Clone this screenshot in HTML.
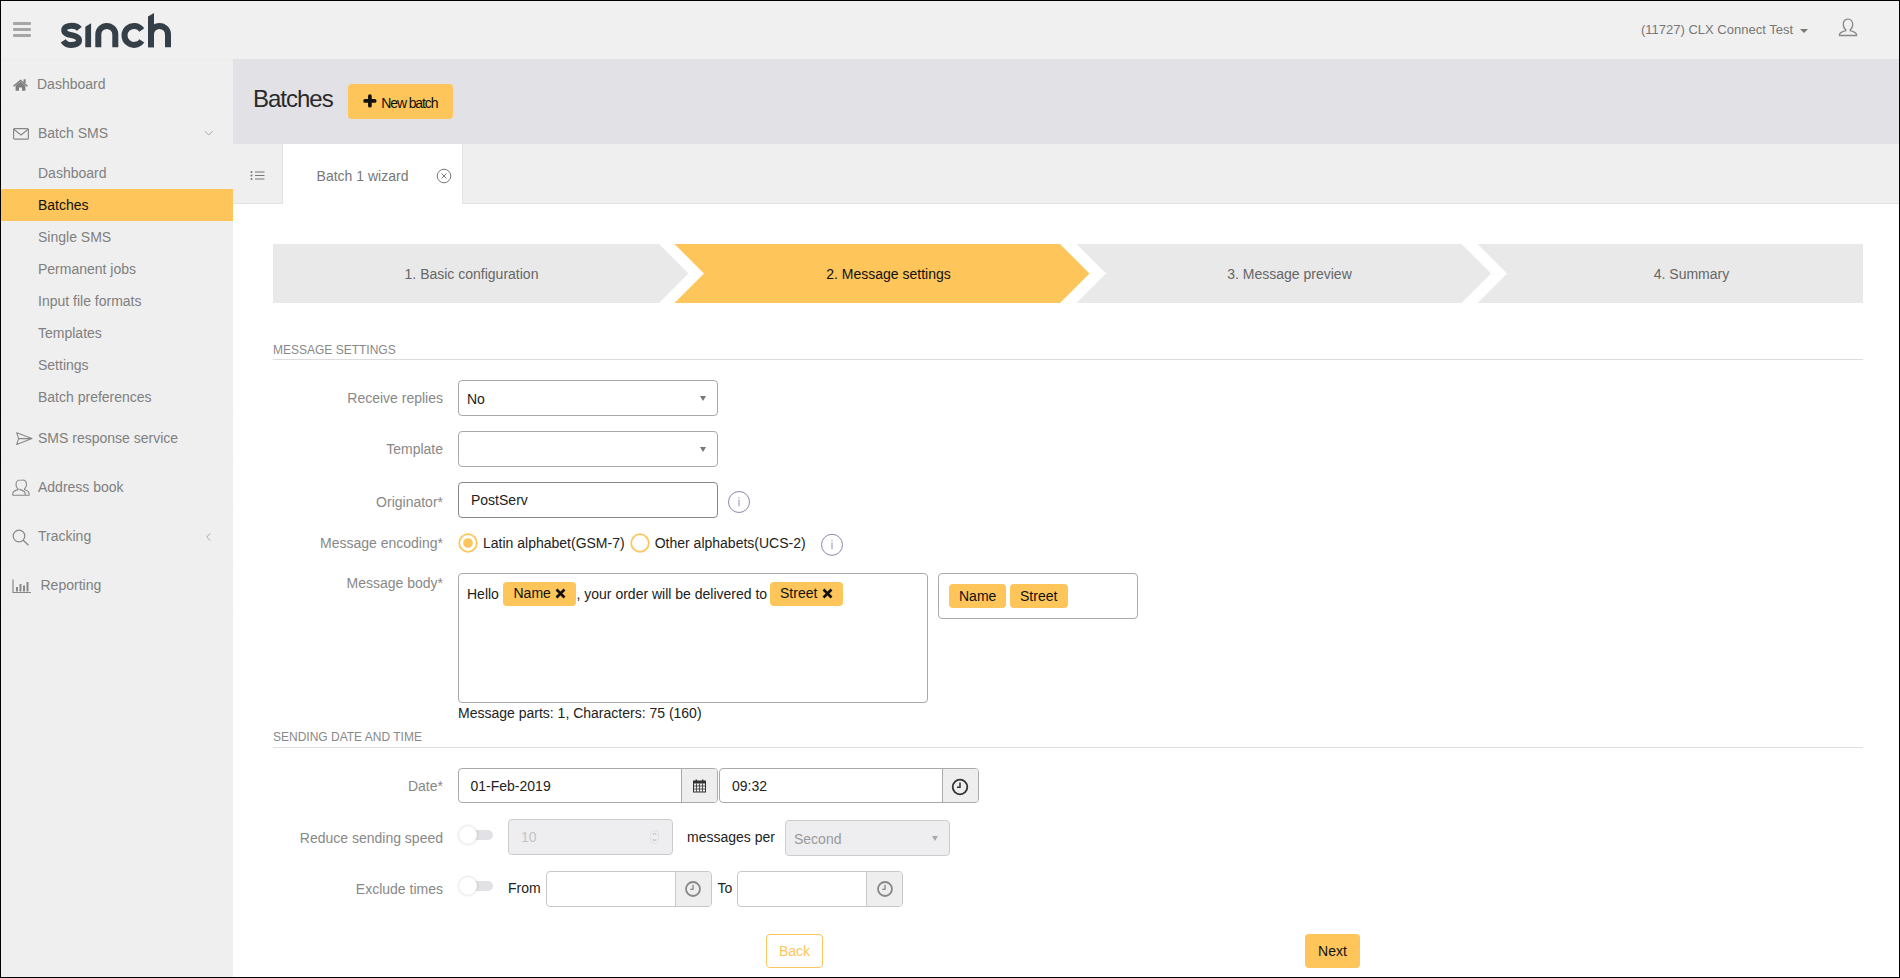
<!DOCTYPE html>
<html>
<head>
<meta charset="utf-8">
<style>
*{box-sizing:border-box;margin:0;padding:0}
html,body{width:1900px;height:978px;overflow:hidden;background:#fff}
body{font-family:"Liberation Sans",sans-serif;font-size:14px;color:#222;position:relative}
.abs{position:absolute}
svg{position:absolute;overflow:visible}
.t{position:absolute;white-space:nowrap;line-height:14px;font-size:14px}
.border{position:absolute;left:0;top:0;width:1900px;height:978px;border:1px solid #000;z-index:100}
.hdr{position:absolute;left:0;top:0;width:1900px;height:59px;background:#f0f0f0}
.side{position:absolute;left:0;top:59px;width:233px;height:919px;background:#efefef}
.phdr{position:absolute;left:233px;top:59px;width:1667px;height:85px;background:#e2e1e6}
.tabbar{position:absolute;left:233px;top:144px;width:1667px;height:60px;background:#efefef;border-bottom:1px solid #e2e1e6}
.listbtn{position:absolute;left:233px;top:144px;width:50px;height:60px;border-right:1px solid #e2e1e6;border-bottom:1px solid #e2e1e6}
.tab{position:absolute;left:283px;top:144px;width:180px;height:60px;background:#fff;border-right:1px solid #e2e1e6}
.sb{color:#808080}
.hl{position:absolute;left:0;top:189px;width:233px;height:32px;background:#fdc55a}
.btn-new{position:absolute;left:348px;top:84px;width:105px;height:35px;background:#fdc55a;border-radius:4px}
.lbl{position:absolute;white-space:nowrap;line-height:14px;font-size:14px;color:#888;right:1457px;text-align:right}
.sec{position:absolute;white-space:nowrap;line-height:12px;font-size:12px;color:#888;left:273px}
.hr{position:absolute;left:273px;width:1590px;height:1px;background:#ddd}
.box{position:absolute;border:1px solid #aaa;border-radius:4px;background:#fff}
.caret{position:absolute;width:0;height:0;border-left:3.5px solid transparent;border-right:3.5px solid transparent;border-top:5px solid #777}
.tag{position:absolute;background:#fdc55a;border-radius:4px;height:24px}
.addon{position:absolute;background:#eee;border-left:1px solid #aaa}
</style>
</head>
<body>
  <div class="hdr"></div>
  <div class="side"></div>
  <div class="phdr"></div>
  <div class="tabbar"></div>
  <div class="listbtn"></div>
  <div class="tab"></div>

  <!-- header left -->
  <div class="abs" style="left:13px;top:22px;width:18px;height:3px;background:#a6a6a6;border-radius:1px"></div>
  <div class="abs" style="left:13px;top:28px;width:18px;height:3px;background:#a6a6a6;border-radius:1px"></div>
  <div class="abs" style="left:13px;top:34px;width:18px;height:3px;background:#a6a6a6;border-radius:1px"></div>
  <svg style="left:0;top:0" width="200" height="58" viewBox="0 0 200 58">
    <g fill="none" stroke="#343f48" stroke-width="6">
      <path d="M79.3 28.8 C77 25.8 73.5 25.8 71.5 25.8 C67.5 25.8 64.2 27.3 64.2 30.3 C64.2 33.6 68 34.4 71.5 35.2 C76 36.2 79 37.2 79 40.6 C79 43.6 75.5 45 71.5 45 C67.5 45 65 43.5 63.2 40.8"/>
      <path d="M98.3 47.3 V34.5 A8.5 8.5 0 0 1 115.3 34.5 V47.3"/>
      <path d="M141.8 29.95 A9.5 9.5 0 1 0 141.8 40.85"/>
      <path d="M151 47.3 V34.5 A8.5 8.5 0 0 1 168 34.5 V47.3"/>
    </g>
    <g fill="#343f48">
      <polygon points="85.3,26.8 91.1,23.3 91.1,47.3 85.3,47.3"/>
      <polygon points="148,16.5 154,13 154,47.3 148,47.3"/>
    </g>
  </svg>

  <!-- header right -->
  <div class="t" style="left:1641px;top:22.7px;font-size:13px;line-height:13px;color:#777">(11727) CLX Connect Test</div>
  <div class="caret" style="left:1800px;top:29px;border-left-width:4px;border-right-width:4px;border-top-width:4px;border-top-color:#777"></div>
  <svg style="left:1838px;top:18px" width="20" height="19" viewBox="0 0 20 19">
    <path d="M10 1.2 C7 1.2 5.3 3.6 5.3 6.6 C5.3 9 6.3 10.8 7.8 11.8 L7.8 12.6 C5 13.4 1.5 14.5 1.5 16.5 L1.5 17.5 L18.5 17.5 L18.5 16.5 C18.5 14.5 15 13.4 12.2 12.6 L12.2 11.8 C13.7 10.8 14.7 9 14.7 6.6 C14.7 3.6 13 1.2 10 1.2 Z" fill="none" stroke="#888" stroke-width="1.3"/>
  </svg>

  <!-- sidebar -->
  <div class="abs" style="left:0;top:59px;width:233px;height:1px;background:#ededed"></div>
  <div class="abs" style="left:0;top:108px;width:233px;height:1px;background:#ededed"></div>
  <div class="hl"></div>
  <svg style="left:13px;top:79px" width="15" height="12" viewBox="0 0 15 12">
    <path d="M7.5 0.5 L0 6.8 L1 7.8 L7.5 2.4 L14 7.8 L15 6.8 Z M10.6 0.3 L12.6 0.3 L12.6 4.6 L10.6 2.9 Z" fill="#808080"/>
    <path d="M2.6 6.8 L7.5 2.8 L12.4 6.8 L12.4 11.8 L9 11.8 L9 8.5 L6 8.5 L6 11.8 L2.6 11.8 Z" fill="#808080"/>
  </svg>
  <div class="t sb" style="left:37px;top:76.7px">Dashboard</div>
  <svg style="left:13px;top:128px" width="17" height="12" viewBox="0 0 17 12">
    <rect x="0.6" y="0.6" width="14.8" height="10.6" rx="1" fill="none" stroke="#888" stroke-width="1.2"/>
    <path d="M0.8 1.2 L8 7 L15.2 1.2" fill="none" stroke="#888" stroke-width="1.2"/>
  </svg>
  <div class="t sb" style="left:38px;top:125.6px">Batch SMS</div>
  <svg style="left:204px;top:130px" width="10" height="7" viewBox="0 0 10 7">
    <path d="M1 1.2 L4.8 5 L8.6 1.2" fill="none" stroke="#aaa" stroke-width="1"/>
  </svg>
  <div class="t sb" style="left:38px;top:165.8px">Dashboard</div>
  <div class="t" style="left:38px;top:197.8px;color:#111">Batches</div>
  <div class="t sb" style="left:38px;top:229.8px">Single SMS</div>
  <div class="t sb" style="left:38px;top:261.8px">Permanent jobs</div>
  <div class="t sb" style="left:38px;top:293.8px">Input file formats</div>
  <div class="t sb" style="left:38px;top:325.8px">Templates</div>
  <div class="t sb" style="left:38px;top:357.8px">Settings</div>
  <div class="t sb" style="left:38px;top:389.8px">Batch preferences</div>
  <div class="abs" style="left:0;top:413px;width:233px;height:1px;background:#ededed"></div>
  <div class="abs" style="left:0;top:462px;width:233px;height:1px;background:#ededed"></div>
  <div class="abs" style="left:0;top:511px;width:233px;height:1px;background:#ededed"></div>
  <div class="abs" style="left:0;top:560px;width:233px;height:1px;background:#ededed"></div>
  <div class="abs" style="left:0;top:609px;width:233px;height:1px;background:#ededed"></div>
  <svg style="left:16px;top:432px" width="17" height="14" viewBox="0 0 17 14">
    <path d="M0.7 0.8 L16 6.6 L0.7 12.6 L2.6 6.6 Z M2.6 6.6 L16 6.6" fill="none" stroke="#888" stroke-width="1.1" stroke-linejoin="round"/>
  </svg>
  <div class="t sb" style="left:38px;top:431.1px">SMS response service</div>
  <svg style="left:12px;top:479px" width="18" height="18" viewBox="0 0 18 18">
    <path d="M8 1 C5.5 1 4 3 4 5.5 C4 7.5 5 9 6 9.8 L6 10.6 C3.5 11.3 0.8 12.4 0.8 14.5 L0.8 16.3 L13.2 16.3 L13.2 14.5 C13.2 12.4 10.5 11.3 8 10.6 L8 9.8" fill="none" stroke="#888" stroke-width="1.1"/>
    <path d="M8.5 1.5 C9.3 1.1 10 1 10.5 1 C13 1 14.5 3 14.5 5.5 C14.5 7.5 13.5 9 12.5 9.8 L12.5 10.6 C14.6 11.3 17 12.4 17 14.5 L17 16.3 L13.5 16.3" fill="none" stroke="#888" stroke-width="1.1"/>
  </svg>
  <div class="t sb" style="left:38px;top:480.2px">Address book</div>
  <svg style="left:12px;top:529px" width="18" height="17" viewBox="0 0 18 17">
    <circle cx="7" cy="7" r="5.8" fill="none" stroke="#888" stroke-width="1.2"/>
    <path d="M11.2 11.2 L16.5 16.3" stroke="#888" stroke-width="1.4"/>
  </svg>
  <div class="t sb" style="left:38px;top:529.3px">Tracking</div>
  <svg style="left:205px;top:532px" width="7" height="10" viewBox="0 0 7 10">
    <path d="M5.3 1.3 L1.8 5 L5.3 8.7" fill="none" stroke="#aaa" stroke-width="1"/>
  </svg>
  <svg style="left:12px;top:579px" width="20" height="15" viewBox="0 0 20 15">
    <path d="M1 0.5 L1 13.5 L19 13.5" fill="none" stroke="#888" stroke-width="1.2"/>
    <rect x="4" y="8" width="2" height="4.5" fill="#888"/>
    <rect x="7.5" y="5" width="2" height="7.5" fill="#888"/>
    <rect x="11" y="6.5" width="2" height="6" fill="#888"/>
    <rect x="14.5" y="3" width="2" height="9.5" fill="#888"/>
  </svg>
  <div class="t sb" style="left:40.5px;top:578.4px">Reporting</div>

  <!-- page header -->
  <div class="t" style="left:253px;top:87.2px;font-size:24px;line-height:24px;letter-spacing:-1px;color:#2a2a2a">Batches</div>
  <div class="btn-new"></div>
  <svg style="left:363.4px;top:94.3px" width="14" height="14" viewBox="0 0 14 14">
    <path d="M6.9 2.1 V11.7 M2.1 6.9 H11.7" stroke="#111" stroke-width="3.7" stroke-linecap="round"/>
  </svg>
  <div class="t" style="left:381.2px;top:95.95px;letter-spacing:-1.1px;color:#111">New batch</div>

  <!-- tab bar -->
  <svg style="left:249px;top:170px" width="17" height="11" viewBox="0 0 17 11">
    <g fill="#777"><circle cx="2.5" cy="2" r="1"/><circle cx="2.5" cy="5.5" r="1"/><circle cx="2.5" cy="9" r="1"/></g>
    <g stroke="#777" stroke-width="1"><path d="M6 2 H15.5 M6 5.5 H15.5 M6 9 H15.5"/></g>
  </svg>
  <div class="t" style="left:316.6px;top:168.95px;color:#777">Batch 1 wizard</div>
  <svg style="left:436px;top:168px" width="16" height="16" viewBox="0 0 16 16">
    <circle cx="8" cy="8" r="6.8" fill="none" stroke="#777" stroke-width="1"/>
    <path d="M5.6 5.6 L10.4 10.4 M10.4 5.6 L5.6 10.4" stroke="#777" stroke-width="1"/>
  </svg>

  <!-- steps -->
  <svg style="left:0;top:0" width="1900" height="320" viewBox="0 0 1900 320">
    <polygon points="273,244 659,244 688.5,273.5 659,303 273,303" fill="#e9e9e9"/>
    <polygon points="674.5,244 1060,244 1089.5,273.5 1060,303 674.5,303 704,273.5" fill="#fdc55a"/>
    <polygon points="1076.5,244 1461.5,244 1491,273.5 1461.5,303 1076.5,303 1106,273.5" fill="#e9e9e9"/>
    <polygon points="1477.5,244 1863,244 1863,303 1477.5,303 1507,273.5" fill="#e9e9e9"/>
  </svg>
  <div class="t" style="left:273px;width:397px;text-align:center;top:267.35px;color:#666">1. Basic configuration</div>
  <div class="t" style="left:690px;width:397px;text-align:center;top:267.35px;color:#111">2. Message settings</div>
  <div class="t" style="left:1091px;width:397px;text-align:center;top:267.35px;color:#666">3. Message preview</div>
  <div class="t" style="left:1493px;width:397px;text-align:center;top:267.35px;color:#666">4. Summary</div>

  <!-- message settings -->
  <div class="sec" style="top:343.84px">MESSAGE SETTINGS</div>
  <div class="hr" style="top:359px"></div>

  <div class="lbl" style="top:391.15px">Receive replies</div>
  <div class="box" style="left:458px;top:380px;width:260px;height:36px"></div>
  <div class="t" style="left:467px;top:392.05px;color:#222">No</div>
  <div class="caret" style="left:700px;top:395.5px"></div>

  <div class="lbl" style="top:441.85px">Template</div>
  <div class="box" style="left:458px;top:431px;width:260px;height:36px"></div>
  <div class="caret" style="left:700px;top:446.5px"></div>

  <div class="lbl" style="top:494.95px">Originator*</div>
  <div class="box" style="left:458px;top:482px;width:260px;height:36px;border-color:#888"></div>
  <div class="t" style="left:471px;top:493.15px;color:#222">PostServ</div>
  <svg style="left:727px;top:490px" width="24" height="24" viewBox="0 0 24 24">
    <circle cx="12" cy="12" r="10.5" fill="none" stroke="#8a8aac" stroke-width="1"/>
    <rect x="11.5" y="7.2" width="1" height="1.2" fill="#a08cb0"/>
    <rect x="11.5" y="9.6" width="1" height="6.8" fill="#9a8cb4"/>
  </svg>

  <div class="lbl" style="top:535.95px">Message encoding*</div>
  <svg style="left:458px;top:533px" width="20" height="20" viewBox="0 0 20 20">
    <circle cx="10" cy="10" r="8.8" fill="#fff" stroke="#fdc55a" stroke-width="1.8"/>
    <circle cx="10" cy="10" r="4.8" fill="#fdc55a"/>
  </svg>
  <div class="t" style="left:483px;top:535.95px;color:#222">Latin alphabet(GSM-7)</div>
  <svg style="left:630px;top:533px" width="20" height="20" viewBox="0 0 20 20">
    <circle cx="10" cy="10" r="8.8" fill="#fff" stroke="#fdc55a" stroke-width="1.8"/>
  </svg>
  <div class="t" style="left:654.7px;top:535.95px;color:#222">Other alphabets(UCS-2)</div>
  <svg style="left:820px;top:533px" width="24" height="24" viewBox="0 0 24 24">
    <circle cx="12" cy="11.8" r="10.5" fill="none" stroke="#8a8aac" stroke-width="1"/>
    <rect x="11.5" y="7" width="1" height="1.2" fill="#a08cb0"/>
    <rect x="11.5" y="9.4" width="1" height="6.8" fill="#9a8cb4"/>
  </svg>

  <div class="lbl" style="top:576.05px">Message body*</div>
  <div class="box" style="left:458px;top:573px;width:470px;height:130px"></div>
  <div class="t" style="left:467px;top:587.15px;color:#222">Hello</div>
  <div class="tag" style="left:503px;top:582px;width:73px;height:24px"></div>
  <div class="t" style="left:513.5px;top:586px;color:#111">Name</div>
  <div class="t" style="left:576.5px;top:587.15px;color:#222">, your order will be delivered to</div>
  <div class="tag" style="left:770px;top:582px;width:73px;height:24px"></div>
  <div class="t" style="left:780px;top:586px;color:#111">Street</div>
  <svg style="left:555px;top:588px" width="11" height="11" viewBox="0 0 11 11"><path d="M1.5 1.5 L9.5 9.5 M9.5 1.5 L1.5 9.5" stroke="#111" stroke-width="2.6"/></svg>
  <svg style="left:822px;top:588px" width="11" height="11" viewBox="0 0 11 11"><path d="M1.5 1.5 L9.5 9.5 M9.5 1.5 L1.5 9.5" stroke="#111" stroke-width="2.6"/></svg>

  <div class="box" style="left:938px;top:573px;width:200px;height:46px"></div>
  <div class="tag" style="left:949px;top:584px;width:57px"></div>
  <div class="t" style="left:959px;top:588.85px;color:#111">Name</div>
  <div class="tag" style="left:1010px;top:584px;width:58px"></div>
  <div class="t" style="left:1020px;top:588.85px;color:#111">Street</div>

  <div class="t" style="left:458px;top:706.2px;color:#222">Message parts: 1, Characters: 75 (160)</div>

  <!-- sending date and time -->
  <div class="sec" style="top:731.24px">SENDING DATE AND TIME</div>
  <div class="hr" style="top:747px"></div>

  <div class="lbl" style="top:779.05px">Date*</div>
  <div class="box" style="left:458px;top:768px;width:260px;height:35px;overflow:hidden">
    <div class="addon" style="left:222px;top:0;width:37px;height:33px"></div>
  </div>
  <div class="t" style="left:470.5px;top:779.05px;color:#222">01-Feb-2019</div>
  <svg style="left:693px;top:779px" width="14" height="14" viewBox="0 0 14 14">
    <rect x="0.5" y="2" width="12" height="11" fill="none" stroke="#333" stroke-width="1"/>
    <rect x="0.5" y="2" width="12" height="2.5" fill="#333"/>
    <path d="M3.3 0.5 V3 M9.7 0.5 V3" stroke="#333" stroke-width="1.4"/>
    <path d="M0.5 7 H12.5 M0.5 10 H12.5 M3.5 4.5 V13 M6.5 4.5 V13 M9.5 4.5 V13" stroke="#333" stroke-width="0.8"/>
  </svg>
  <div class="box" style="left:719px;top:768px;width:260px;height:35px;overflow:hidden">
    <div class="addon" style="left:222px;top:0;width:37px;height:33px"></div>
  </div>
  <div class="t" style="left:732px;top:779.05px;color:#222">09:32</div>
  <svg style="left:951px;top:778px" width="18" height="18" viewBox="0 0 18 18">
    <circle cx="9" cy="9" r="7.3" fill="none" stroke="#333" stroke-width="1.8"/>
    <path d="M9 4.5 V9.3 H6" fill="none" stroke="#333" stroke-width="1.5"/>
  </svg>

  <div class="lbl" style="top:830.85px">Reduce sending speed</div>
  <div class="abs" style="left:468px;top:830px;width:25px;height:10px;border-radius:5px;background:#e2e1e6"></div>
  <div class="abs" style="left:459px;top:826px;width:18px;height:18px;border-radius:50%;background:#fff;box-shadow:0 0 3px rgba(0,0,0,0.22)"></div>
  <div class="box" style="left:508px;top:819px;width:165px;height:36px;background:#eeeef0;border-color:#ccc"></div>
  <div class="t" style="left:521px;top:829.85px;color:#c4c4c4">10</div>
  <svg style="left:650px;top:830px" width="9" height="14" viewBox="0 0 9 14">
    <rect x="0.5" y="0.5" width="8" height="13" rx="4" fill="none" stroke="#ddd" stroke-width="0.8"/>
    <path d="M2.8 5 L4.5 3 L6.2 5 M2.8 9 L4.5 11 L6.2 9" fill="none" stroke="#aaa" stroke-width="0.8"/>
  </svg>
  <div class="t" style="left:687px;top:829.65px;color:#222">messages per</div>
  <div class="box" style="left:785px;top:820px;width:165px;height:36px;background:#eeeef0;border-color:#ccc"></div>
  <div class="t" style="left:794px;top:831.85px;color:#999">Second</div>
  <div class="caret" style="left:932px;top:835.5px;border-top-color:#aaa"></div>

  <div class="lbl" style="top:882.15px">Exclude times</div>
  <div class="abs" style="left:468px;top:881px;width:25px;height:10px;border-radius:5px;background:#e2e1e6"></div>
  <div class="abs" style="left:459px;top:877px;width:18px;height:18px;border-radius:50%;background:#fff;box-shadow:0 0 3px rgba(0,0,0,0.22)"></div>
  <div class="t" style="left:508px;top:881px;color:#222">From</div>
  <div class="box" style="left:546px;top:871px;width:166px;height:36px;overflow:hidden;border-color:#c8c8c8">
    <div class="addon" style="left:128px;top:0;width:37px;height:34px;border-left-color:#c8c8c8"></div>
  </div>
  <svg style="left:684px;top:880px" width="18" height="18" viewBox="0 0 18 18">
    <circle cx="9" cy="9" r="7" fill="none" stroke="#888" stroke-width="1.8"/>
    <path d="M9 4.8 V9.3 H6.2" fill="none" stroke="#888" stroke-width="1.3"/>
  </svg>
  <div class="t" style="left:717.5px;top:881px;color:#222">To</div>
  <div class="box" style="left:737px;top:871px;width:166px;height:36px;overflow:hidden;border-color:#c8c8c8">
    <div class="addon" style="left:128px;top:0;width:37px;height:34px;border-left-color:#c8c8c8"></div>
  </div>
  <svg style="left:876px;top:880px" width="18" height="18" viewBox="0 0 18 18">
    <circle cx="9" cy="9" r="7" fill="none" stroke="#888" stroke-width="1.8"/>
    <path d="M9 4.8 V9.3 H6.2" fill="none" stroke="#888" stroke-width="1.3"/>
  </svg>

  <!-- buttons -->
  <div class="abs" style="left:766px;top:934px;width:57px;height:34px;border:1px solid #fdc55a;border-radius:4px;background:#fff"></div>
  <div class="t" style="left:766px;width:57px;text-align:center;top:944px;color:#fdc55a">Back</div>
  <div class="abs" style="left:1305px;top:934px;width:55px;height:34px;border-radius:4px;background:#fdc55a"></div>
  <div class="t" style="left:1305px;width:55px;text-align:center;top:944px;color:#111">Next</div>

  <div class="border"></div>
</body>
</html>
